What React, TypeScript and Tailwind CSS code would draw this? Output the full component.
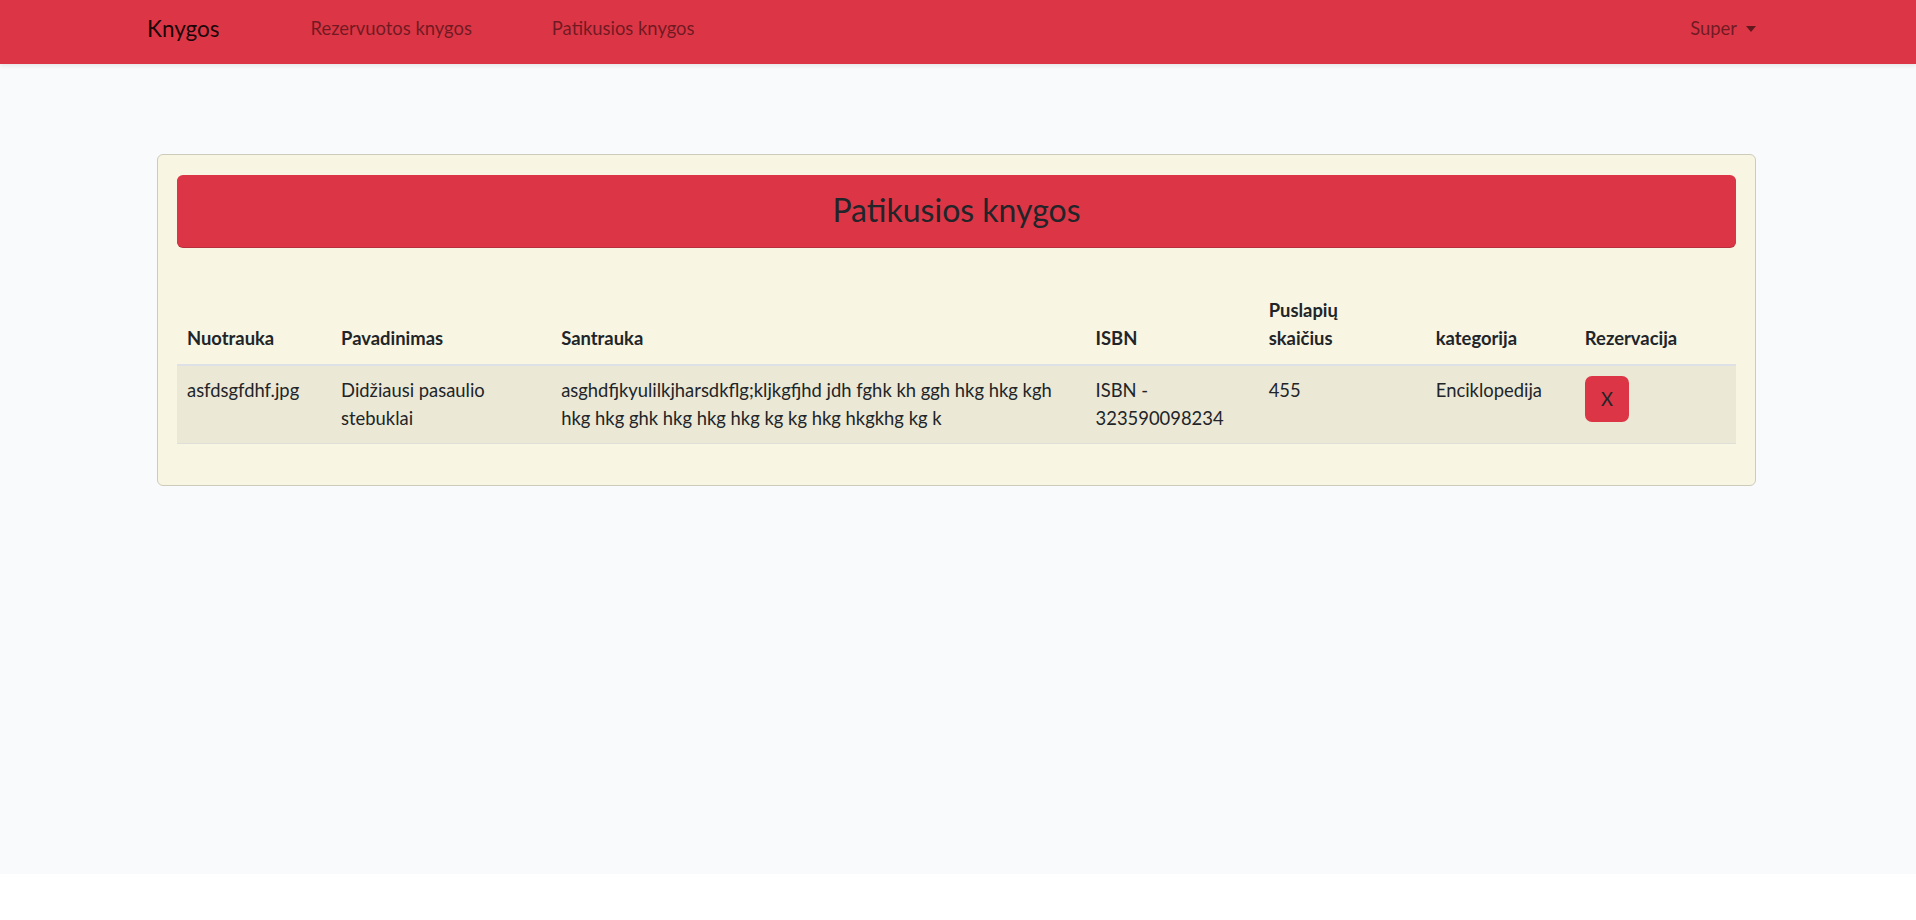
const columns = [
  { key: 'photo', label: 'Nuotrauka', width: 'w-[154px]' },
  { key: 'title', label: 'Pavadinimas', width: 'w-[220px]' },
  { key: 'summary', label: 'Santrauka', width: 'w-[534px]' },
  { key: 'isbn', label: 'ISBN', width: 'w-[173px]' },
  { key: 'pages', label: 'Puslapių skaičius', width: 'w-[167px]' },
  { key: 'category', label: 'kategorija', width: 'w-[149px]' },
  { key: 'reserve', label: 'Rezervacija', width: 'w-[161px]' },
]

const books = [
  {
    id: 1,
    photo: 'asfdsgfdhf.jpg',
    title: 'Didžiausi pasaulio stebuklai',
    summary: 'asghdfjkyulilkjharsdkflg;kljkgfjhd jdh fghk kh ggh hkg hkg kgh hkg hkg ghk hkg hkg hkg kg kg hkg hkgkhg kg k',
    isbn: 'ISBN - 323590098234',
    pages: 455,
    category: 'Enciklopedija',
  },
]

function Navbar() {
  return (
    <nav className="h-[64px] bg-[#dc3545] shadow-[0_2px_4px_rgba(0,0,0,0.08)] relative">
      <div className="flex items-center h-full pl-[147px] pr-[160px] pb-[6px]">
        <a href="#" className="text-[22.5px] text-[rgba(0,0,0,0.9)] mr-[91px]">
          Knygos
        </a>
        <div className="flex gap-[80px] text-[18.4px] text-[rgba(0,0,0,0.5)]">
          <a href="#">Rezervuotos knygos</a>
          <a href="#">Patikusios knygos</a>
        </div>
        <div className="ml-auto flex items-center gap-[9px] text-[18.4px] text-[rgba(0,0,0,0.5)]">
          <span>Super</span>
          <span className="w-0 h-0 border-t-[6px] border-t-[rgba(0,0,0,0.55)] border-x-[5.5px] border-x-transparent" />
        </div>
      </div>
    </nav>
  )
}

export default function App() {
  return (
    <div className="min-h-screen bg-white font-['Lato',sans-serif] text-[#212529]">
      <div className="h-[874px] bg-[#f8fafc]">
        <Navbar />

        <main className="pt-[90px] pl-[157px]">
          <div className="w-[1599px] bg-[#f8f5e3] border border-[#cfcbba] rounded-[6px] px-[19px] pt-[20px] pb-[41px]">
            {/* Header */}
            <div className="h-[72px] bg-[#dc3545] rounded-[6px] shadow-[0_1px_0_#b8303d] flex items-center justify-center">
              <h2 className="text-[32px] leading-none pb-[2px]">Patikusios knygos</h2>
            </div>

            {/* Table */}
            <table className="mt-[37px] w-full table-fixed border-collapse text-[18.4px] leading-[28px]">
              <colgroup>
                {columns.map((col) => (
                  <col key={col.key} className={col.width} />
                ))}
              </colgroup>
              <thead>
                <tr className="border-b-2 border-[#dee2e6]">
                  {columns.map((col) => (
                    <th key={col.key} className="px-[10px] py-[12px] text-left align-bottom font-bold">
                      {col.key === 'pages' ? (
                        <>
                          Puslapių
                          <br />
                          skaičius
                        </>
                      ) : (
                        col.label
                      )}
                    </th>
                  ))}
                </tr>
              </thead>
              <tbody>
                {books.map((book) => (
                  <tr key={book.id} className="bg-[#ece8d6] border-b border-[#dedfd9]">
                    <td className="px-[10px] pt-[10px] pb-[11px] align-top">{book.photo}</td>
                    <td className="px-[10px] pt-[10px] pb-[11px] align-top">{book.title}</td>
                    <td className="px-[10px] pt-[10px] pb-[11px] align-top">{book.summary}</td>
                    <td className="px-[10px] pt-[10px] pb-[11px] align-top">{book.isbn}</td>
                    <td className="px-[10px] pt-[10px] pb-[11px] align-top">{book.pages}</td>
                    <td className="px-[10px] pt-[10px] pb-[11px] align-top">{book.category}</td>
                    <td className="px-[10px] pt-[10px] pb-[11px] align-top">
                      <button className="w-[44px] h-[46px] bg-[#dc3545] rounded-[7px] text-[#212529] text-[18.4px] flex items-center justify-center">
                        X
                      </button>
                    </td>
                  </tr>
                ))}
              </tbody>
            </table>
          </div>
        </main>
      </div>
    </div>
  )
}
